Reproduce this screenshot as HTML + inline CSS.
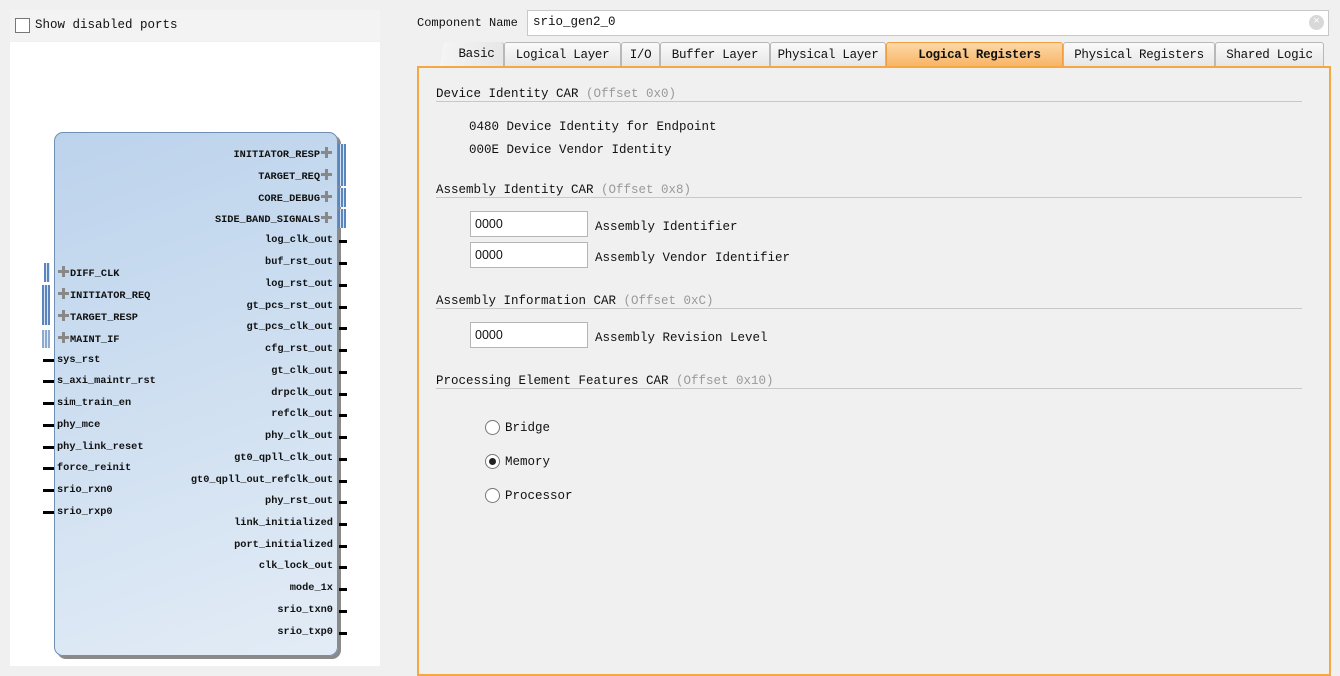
<!DOCTYPE html>
<html><head><meta charset="utf-8"><style>
*{margin:0;padding:0;box-sizing:border-box}
body{width:1340px;height:666px;background:#f0f0f0;font-family:"Liberation Mono",monospace;font-size:12px;color:#111;position:relative;overflow:hidden}
.a{position:absolute;white-space:nowrap}
.blk{position:absolute;left:54px;top:132px;width:284px;height:524px;border:1px solid #6f8fb5;border-radius:9px;background:linear-gradient(160deg,#bcd3ec 0%,#d3e2f2 60%,#e3ecf6 100%);box-shadow:3px 3px 0 #8a8a8a}
.pr{position:absolute;right:4px;font-size:10.3px;font-weight:bold;text-align:right;line-height:12px}
.pl{position:absolute;left:2px;font-size:10.3px;font-weight:bold;line-height:12px}
.pin{position:absolute;width:8px;height:3px;background:#000}
.bus{position:absolute;width:8px;background:repeating-linear-gradient(90deg,#5a86bd 0 2px,#d6e4f3 2px 3px,#5a86bd 3px 5px,#d6e4f3 5px 6px,#5a86bd 6px 8px)}
.plus{display:inline-block;width:11px;height:11px;vertical-align:-1px;margin:0 1px;background:linear-gradient(#888,#888) center/11px 3px no-repeat,linear-gradient(#888,#888) center/3px 11px no-repeat}
.tab{position:absolute;top:42px;height:25px;border:1px solid #b8b8b8;border-bottom:none;background:linear-gradient(#fafafa,#e6e6e6);font-size:12.5px;line-height:24px;text-align:center;border-radius:3px 3px 0 0;letter-spacing:-0.3px}
.sec{position:absolute;left:436px;font-size:12.5px}
.sec span{color:#999}
.hr{position:absolute;left:436px;width:866px;height:1px;background:#c8c8c8}
.inp{position:absolute;left:470px;width:118px;height:26px;background:#fff;border:1px solid #b5b5b5;font-family:"Liberation Sans",sans-serif;font-size:12.5px;padding:5px 4px}
.lab{position:absolute;left:595px;font-size:12.5px}
.rad{position:absolute;left:485px;width:15px;height:15px;border:1px solid #777;border-radius:50%;background:#fff}
</style></head><body>
<div class="a" style="left:10px;top:10px;width:370px;height:31px;background:#f3f3f3"></div>
<div class="a" style="left:15px;top:18px;width:15px;height:15px;border:1px solid #777;background:#fff"></div>
<div class="a" style="left:35px;top:18px;font-size:12.5px">Show disabled ports</div>
<div class="a" style="left:10px;top:42px;width:370px;height:624px;background:#fff"></div>
<div class="blk">
<div class="pr" style="top:14px">INITIATOR_RESP<span class="plus"></span></div>
<div class="pr" style="top:36px">TARGET_REQ<span class="plus"></span></div>
<div class="pr" style="top:58px">CORE_DEBUG<span class="plus"></span></div>
<div class="pr" style="top:79px">SIDE_BAND_SIGNALS<span class="plus"></span></div>
<div class="pr" style="top:101px">log_clk_out</div>
<div class="pr" style="top:123px">buf_rst_out</div>
<div class="pr" style="top:145px">log_rst_out</div>
<div class="pr" style="top:167px">gt_pcs_rst_out</div>
<div class="pr" style="top:188px">gt_pcs_clk_out</div>
<div class="pr" style="top:210px">cfg_rst_out</div>
<div class="pr" style="top:232px">gt_clk_out</div>
<div class="pr" style="top:254px">drpclk_out</div>
<div class="pr" style="top:275px">refclk_out</div>
<div class="pr" style="top:297px">phy_clk_out</div>
<div class="pr" style="top:319px">gt0_qpll_clk_out</div>
<div class="pr" style="top:341px">gt0_qpll_out_refclk_out</div>
<div class="pr" style="top:362px">phy_rst_out</div>
<div class="pr" style="top:384px">link_initialized</div>
<div class="pr" style="top:406px">port_initialized</div>
<div class="pr" style="top:427px">clk_lock_out</div>
<div class="pr" style="top:449px">mode_1x</div>
<div class="pr" style="top:471px">srio_txn0</div>
<div class="pr" style="top:493px">srio_txp0</div>
<div class="pl" style="top:133px"><span class="plus"></span>DIFF_CLK</div>
<div class="pl" style="top:155px"><span class="plus"></span>INITIATOR_REQ</div>
<div class="pl" style="top:177px"><span class="plus"></span>TARGET_RESP</div>
<div class="pl" style="top:199px"><span class="plus"></span>MAINT_IF</div>
<div class="pl" style="top:221px">sys_rst</div>
<div class="pl" style="top:242px">s_axi_maintr_rst</div>
<div class="pl" style="top:264px">sim_train_en</div>
<div class="pl" style="top:286px">phy_mce</div>
<div class="pl" style="top:308px">phy_link_reset</div>
<div class="pl" style="top:329px">force_reinit</div>
<div class="pl" style="top:351px">srio_rxn0</div>
<div class="pl" style="top:373px">srio_rxp0</div>
</div>
<div class="bus" style="left:338px;top:144px;height:42px"></div>
<div class="bus" style="left:338px;top:188px;height:19px"></div>
<div class="bus" style="left:338px;top:209px;height:19px"></div>
<div class="pin" style="left:339px;top:240px"></div><div class="pin" style="left:339px;top:262px"></div>
<div class="pin" style="left:339px;top:284px"></div><div class="pin" style="left:339px;top:306px"></div>
<div class="pin" style="left:339px;top:327px"></div><div class="pin" style="left:339px;top:349px"></div>
<div class="pin" style="left:339px;top:371px"></div><div class="pin" style="left:339px;top:393px"></div>
<div class="pin" style="left:339px;top:414px"></div><div class="pin" style="left:339px;top:436px"></div>
<div class="pin" style="left:339px;top:458px"></div><div class="pin" style="left:339px;top:480px"></div>
<div class="pin" style="left:339px;top:501px"></div><div class="pin" style="left:339px;top:523px"></div>
<div class="pin" style="left:339px;top:545px"></div><div class="pin" style="left:339px;top:566px"></div>
<div class="pin" style="left:339px;top:588px"></div><div class="pin" style="left:339px;top:610px"></div>
<div class="pin" style="left:339px;top:632px"></div>
<div class="bus" style="left:44px;top:263px;height:19px;width:6px"></div>
<div class="bus" style="left:42px;top:285px;height:40px"></div>
<div class="bus" style="left:42px;top:330px;height:18px;opacity:.7"></div>
<div class="pin" style="left:43px;top:359px;width:11px"></div><div class="pin" style="left:43px;top:380px;width:11px"></div>
<div class="pin" style="left:43px;top:402px;width:11px"></div><div class="pin" style="left:43px;top:424px;width:11px"></div>
<div class="pin" style="left:43px;top:446px;width:11px"></div><div class="pin" style="left:43px;top:467px;width:11px"></div>
<div class="pin" style="left:43px;top:489px;width:11px"></div><div class="pin" style="left:43px;top:511px;width:11px"></div>
<div class="a" style="left:417px;top:16px;font-size:12px">Component Name</div>
<div class="a" style="left:527px;top:10px;width:802px;height:26px;background:#fff;border:1px solid #c8c8c8;padding:4px 5px;font-size:12.5px">srio_gen2_0</div>
<div class="a" style="left:1309px;top:15px;width:15px;height:15px;border-radius:50%;background:#d8d8d8;color:#fff;font-size:11px;line-height:15px;text-align:center">×</div>
<div class="tab" style="left:430px;width:74px;padding-left:20px;border-left:none;border-top:none;background:linear-gradient(100deg,transparent 18%,#f4f4f4 18%,#e6e6e6)">Basic</div>
<div class="tab" style="left:504px;width:117px">Logical Layer</div>
<div class="tab" style="left:621px;width:39px">I/O</div>
<div class="tab" style="left:660px;width:110px">Buffer Layer</div>
<div class="tab" style="left:770px;width:116px">Physical Layer</div>
<div class="tab" style="left:886px;width:177px;background:linear-gradient(#fcd9a8,#f8b363);border-color:#f0a040;font-weight:bold;padding-left:10px">Logical Registers</div>
<div class="tab" style="left:1063px;width:152px">Physical Registers</div>
<div class="tab" style="left:1215px;width:109px">Shared Logic</div>
<div class="a" style="left:417px;top:66px;width:914px;height:610px;border:2px solid #f5a742;background:#f0f0f0"></div>
<div class="sec" style="top:87px">Device Identity CAR <span>(Offset 0x0)</span></div><div class="hr" style="top:101px"></div>
<div class="a" style="left:469px;top:120px;font-size:12.5px">0480 Device Identity for Endpoint</div>
<div class="a" style="left:469px;top:143px;font-size:12.5px">000E Device Vendor Identity</div>
<div class="sec" style="top:183px">Assembly Identity CAR <span>(Offset 0x8)</span></div><div class="hr" style="top:197px"></div>
<div class="inp" style="top:211px">0000</div><div class="lab" style="top:220px">Assembly Identifier</div>
<div class="inp" style="top:242px">0000</div><div class="lab" style="top:251px">Assembly Vendor Identifier</div>
<div class="sec" style="top:294px">Assembly Information CAR <span>(Offset 0xC)</span></div><div class="hr" style="top:308px"></div>
<div class="inp" style="top:322px">0000</div><div class="lab" style="top:331px">Assembly Revision Level</div>
<div class="sec" style="top:374px">Processing Element Features CAR <span>(Offset 0x10)</span></div><div class="hr" style="top:388px"></div>
<div class="rad" style="top:420px"></div><div class="a" style="left:505px;top:421px;font-size:12.5px">Bridge</div>
<div class="rad" style="top:454px"></div><div class="a" style="left:489px;top:458px;width:7px;height:7px;border-radius:50%;background:#222"></div><div class="a" style="left:505px;top:455px;font-size:12.5px">Memory</div>
<div class="rad" style="top:488px"></div><div class="a" style="left:505px;top:489px;font-size:12.5px">Processor</div>
</body></html>
